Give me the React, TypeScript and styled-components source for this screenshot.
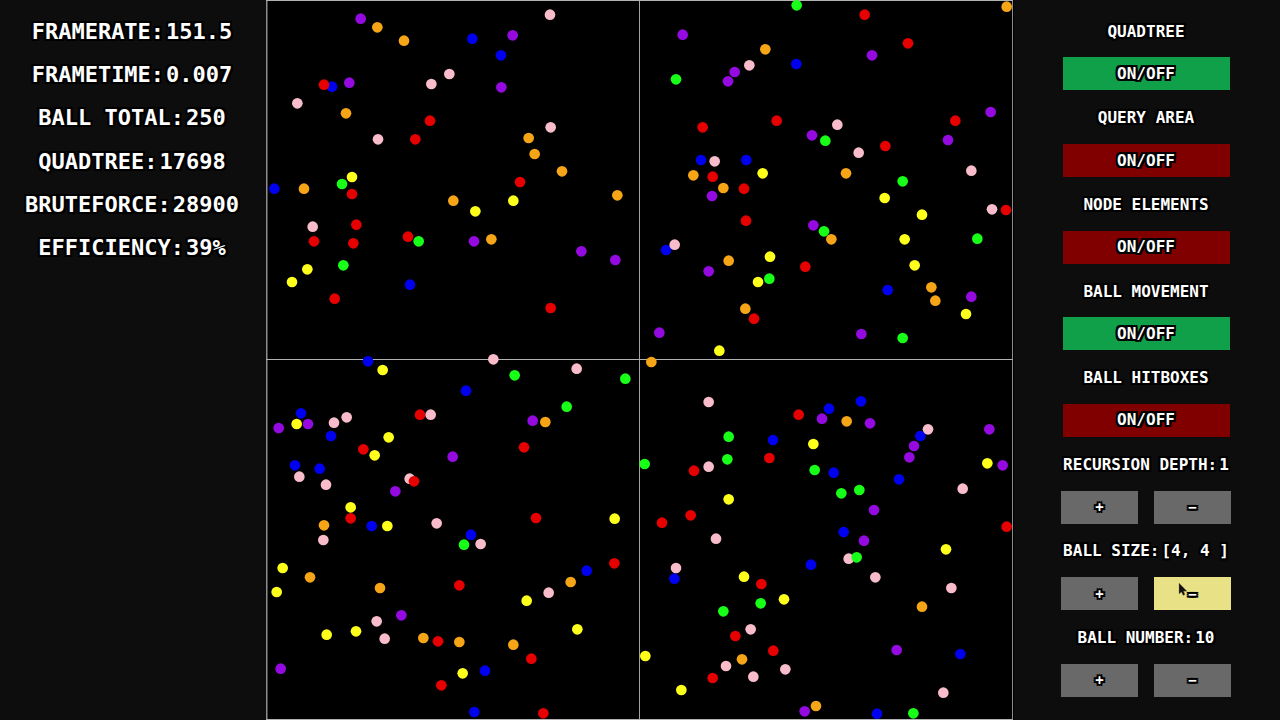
import React, { useId } from "react";
import styled, { createGlobalStyle } from "styled-components";

const GlobalStyle = createGlobalStyle`
  * { box-sizing: border-box; }
  body {
    margin: 0;
    background: #0d0d0d;
    color: #ffffff;
    font-family: "DejaVu Sans Mono", monospace;
    font-weight: 700;
  }
`;

const outline = `
  text-shadow:
    -2px 0 #000, 2px 0 #000, 0 -2px #000, 0 2px #000,
    -1px -1px #000, 1px -1px #000, -1px 1px #000, 1px 1px #000,
    -2px -2px #000, 2px -2px #000, -2px 2px #000, 2px 2px #000;
`;

const Page = styled.div`
  display: grid;
  grid-template-columns: 266fr 748fr 266fr;
  min-height: 100vh;
`;

const StatList = styled.dl`
  margin: 0;
  padding: 10px 2px 17px 0;
  display: grid;
  grid-template-rows: repeat(16, 1fr);
`;

const Stat = styled.div`
  display: flex;
  align-items: center;
  justify-content: center;
  gap: 2px;
  font-size: 22px;
  line-height: 28px;
  white-space: nowrap;
  ${outline}
`;

const StatName = styled.dt`
  margin: 0;
`;

const StatValue = styled.dd`
  margin: 0;
`;

const Field = styled.svg`
  display: block;
  width: 100%;
  height: auto;
  background: #000000;
`;

const Controls = styled.form`
  padding: 9px 2px 18px 0;
  display: grid;
  grid-auto-rows: 1fr;
`;

const Label = styled.div`
  display: flex;
  align-items: center;
  justify-content: center;
  gap: 2px;
  padding-top: 2px;
  font-size: 16px;
  line-height: 24px;
  white-space: nowrap;
  ${outline}
`;

const ControlRow = styled.div`
  display: flex;
  align-items: center;
  justify-content: center;
  gap: 16px;
`;

const Button = styled.button`
  position: relative;
  height: 33px;
  padding: 0;
  border: 0;
  border-radius: 0;
  color: #ffffff;
  font: inherit;
  line-height: 24px;
  ${outline}
`;

const ToggleButton = styled(Button)<{ $on: boolean }>`
  width: 167px;
  font-size: 16px;
  background: ${(p) => (p.$on ? "#10a04a" : "#800000")};
`;

const StepButton = styled(Button)<{ $hover?: boolean }>`
  width: 77px;
  font-size: 14px;
  background: ${(p) => (p.$hover ? "#e9e186" : "#696969")};
`;

const Pointer = styled.svg`
  position: absolute;
  left: 24px;
  top: 5px;
  width: 10px;
  height: 15px;
`;

const stats: [string, string][] = [
  ["FRAMERATE:", "151.5"],
  ["FRAMETIME:", "0.007"],
  ["BALL TOTAL:", "250"],
  ["QUADTREE:", "17698"],
  ["BRUTEFORCE:", "28900"],
  ["EFFICIENCY:", "39%"],
];

const toggles: [string, boolean][] = [
  ["QUADTREE", true],
  ["QUERY AREA", false],
  ["NODE ELEMENTS", false],
  ["BALL MOVEMENT", true],
  ["BALL HITBOXES", false],
];

const steppers: [string, string, boolean][] = [
  ["RECURSION DEPTH:", "1", false],
  ["BALL SIZE:", "[4, 4 ]", true],
  ["BALL NUMBER:", "10", false],
];

const colours = {
  v: "#940ae0",
  o: "#f5a516",
  k: "#f9bccb",
  r: "#e60000",
  b: "#0000f0",
  g: "#18ff18",
  y: "#ffff1c",
};

type Ball = [keyof typeof colours, number, number];

// Field units are thirds of a pixel; each cluster is offset by its origin.
const clusters: { x: number; y: number; balls: Ball[] }[] = [
  {
    x: 0, y: 0,
    balls: [
      ["v", 284, 56], ["o", 334, 82], ["o", 414, 122], ["k", 550, 222], ["k", 496, 252],
      ["b", 198, 260], ["r", 174, 254], ["v", 250, 248], ["k", 94, 310], ["o", 240, 340],
      ["k", 336, 418], ["r", 448, 418], ["r", 492, 362], ["y", 258, 531],
    ],
  },
  {
    x: 552, y: 0,
    balls: [
      ["k", 300, 44], ["b", 67, 116], ["v", 188, 106], ["b", 153, 166], ["v", 154, 262],
      ["k", 302, 382], ["o", 236, 414], ["o", 254, 462], ["o", 336, 514],
    ],
  },
  {
    x: 0, y: 540,
    balls: [
      ["b", 25, 26], ["o", 114, 26], ["g", 228, 12], ["r", 258, 42], ["r", 762, 6],
      ["o", 562, 62], ["y", 628, 94], ["y", 742, 62], ["o", 1054, 46], ["k", 140, 140],
      ["r", 144, 184], ["r", 271, 134], ["r", 262, 190], ["r", 426, 170], ["g", 458, 184],
      ["v", 624, 184], ["o", 676, 178], ["v", 946, 214], ["v", 1048, 240], ["y", 124, 268],
      ["y", 78, 306], ["g", 232, 256], ["b", 432, 314], ["r", 206, 356], ["r", 854, 384],
    ],
  },
  {
    x: 1122, y: 0,
    balls: [
      ["g", 470, 16], ["r", 674, 44], ["o", 1100, 20], ["v", 128, 104], ["r", 804, 130],
      ["o", 376, 148], ["v", 696, 166], ["k", 328, 196], ["b", 469, 192], ["v", 284, 216],
      ["v", 264, 244], ["g", 108, 238], ["v", 1052, 336], ["r", 188, 382], ["r", 410, 362],
      ["k", 592, 374], ["r", 946, 362], ["v", 516, 406], ["g", 556, 422], ["r", 736, 438],
      ["v", 924, 420], ["k", 656, 458], ["b", 183, 480], ["k", 224, 484], ["b", 319, 480],
      ["o", 160, 526], ["r", 218, 530], ["y", 368, 520], ["o", 618, 520], ["k", 994, 512],
    ],
  },
  {
    x: 1122, y: 540,
    balls: [
      ["g", 788, 4], ["o", 250, 24], ["r", 312, 26], ["v", 216, 48], ["y", 734, 54],
      ["y", 846, 104], ["k", 1056, 88], ["r", 1098, 90], ["r", 318, 122], ["v", 520, 136],
      ["g", 552, 154], ["o", 574, 178], ["y", 794, 178], ["g", 1012, 176], ["b", 78, 210],
      ["k", 104, 194], ["y", 390, 230], ["o", 266, 242], ["v", 206, 274], ["r", 496, 260],
      ["y", 824, 256], ["y", 354, 306], ["g", 388, 296], ["b", 743, 330], ["o", 874, 322],
      ["o", 886, 362], ["v", 994, 350], ["o", 316, 386], ["r", 342, 416], ["y", 978, 402],
      ["v", 58, 458], ["v", 664, 462], ["g", 788, 474], ["y", 238, 512],
    ],
  },
  {
    x: 0, y: 1068,
    balls: [
      ["b", 306, 16], ["y", 350, 42], ["k", 682, 10], ["k", 932, 38], ["g", 746, 58],
      ["g", 1078, 68], ["b", 600, 104], ["g", 902, 152], ["b", 105, 172], ["y", 92, 204],
      ["v", 126, 204], ["v", 38, 216], ["k", 204, 200], ["k", 242, 184], ["r", 462, 176],
      ["k", 494, 176], ["v", 800, 194], ["o", 838, 198], ["b", 195, 240], ["y", 368, 244],
      ["r", 292, 280], ["y", 326, 298], ["r", 774, 274], ["v", 560, 302], ["b", 87, 328],
      ["b", 161, 338], ["k", 100, 362], ["k", 180, 386], ["k", 431, 368], ["r", 444, 376],
      ["v", 388, 406], ["y", 254, 454], ["r", 254, 487], ["o", 174, 508], ["b", 317, 510],
      ["y", 364, 510], ["k", 512, 502], ["r", 810, 486], ["y", 1046, 488], ["b", 615, 536],
      ["k", 172, 552],
    ],
  },
  {
    x: 0, y: 1620,
    balls: [
      ["g", 594, 14], ["k", 644, 12], ["y", 50, 84], ["o", 132, 112], ["r", 1045, 70],
      ["b", 962, 92], ["o", 914, 126], ["r", 580, 136], ["o", 342, 144], ["y", 32, 156],
      ["k", 848, 158], ["y", 782, 182], ["v", 406, 226], ["k", 332, 244], ["y", 182, 284],
      ["y", 270, 274], ["k", 356, 296], ["o", 472, 294], ["r", 516, 304], ["o", 580, 306],
      ["o", 742, 314], ["y", 934, 268], ["r", 796, 356], ["v", 44, 386], ["y", 590, 400],
      ["b", 657, 392], ["r", 526, 436], ["b", 625, 516], ["r", 832, 520],
    ],
  },
  {
    x: 1122, y: 1068,
    balls: [
      ["o", 34, 18], ["k", 206, 138], ["b", 663, 136], ["r", 476, 176], ["b", 567, 158],
      ["v", 546, 188], ["o", 620, 196], ["v", 690, 202], ["g", 266, 242], ["b", 399, 252],
      ["y", 520, 264], ["b", 841, 240], ["k", 864, 220], ["v", 822, 270], ["v", 808, 304],
      ["v", 1048, 220], ["g", 14, 324], ["g", 262, 310], ["r", 388, 306], ["r", 162, 344],
      ["k", 206, 332], ["g", 524, 342], ["b", 581, 350], ["y", 1042, 322], ["v", 1088, 328],
      ["b", 777, 370], ["g", 604, 412], ["g", 658, 402], ["k", 968, 398], ["y", 266, 430],
      ["r", 66, 500], ["r", 152, 478], ["v", 702, 462], ["b", 611, 528], ["k", 228, 548],
      ["v", 672, 554], ["r", 1100, 512],
    ],
  },
  {
    x: 1122, y: 1620,
    balls: [
      ["y", 918, 28], ["k", 626, 56], ["g", 650, 52], ["b", 513, 74], ["b", 103, 116],
      ["k", 108, 84], ["y", 312, 110], ["r", 364, 132], ["k", 706, 112], ["k", 934, 144],
      ["y", 432, 178], ["g", 362, 190], ["g", 250, 214], ["o", 846, 200], ["k", 332, 268],
      ["r", 286, 288], ["y", 16, 348], ["r", 400, 332], ["v", 770, 330], ["b", 961, 342],
      ["o", 306, 358], ["k", 258, 378], ["k", 436, 388], ["r", 218, 414], ["k", 340, 410],
      ["y", 124, 450], ["k", 910, 458], ["o", 528, 498], ["v", 494, 514], ["b", 711, 521],
      ["g", 820, 520],
    ],
  },
];

function BallField() {
  return (
    <Field viewBox="0 0 2244 2160" role="img" aria-label="Balls in the quadtree">
      <g fill="none" strokeWidth="3">
        <path d="M1.5 0V2160M2239.5 0V2160" stroke="#8c8c8c" />
        <path d="M4.5 0V2160" stroke="#4a4a4a" />
        <path d="M1120.5 0V2160" stroke="#a2a2a2" />
        <path d="M0 1.5H2241M0 1078.5H2241M0 2158.5H2241" stroke="#b2b2b2" />
      </g>
      {clusters.map((cluster, i) => (
        <g key={i} transform={`translate(${cluster.x} ${cluster.y})`}>
          {cluster.balls.map(([colour, x, y], j) => (
            <circle key={j} cx={x} cy={y} r="16" fill={colours[colour]} />
          ))}
        </g>
      ))}
    </Field>
  );
}

function Toggle({ name, on }: { name: string; on: boolean }) {
  const id = useId();
  return (
    <>
      <Label id={id}>{name}</Label>
      <ControlRow>
        <ToggleButton type="button" $on={on} aria-pressed={on} aria-describedby={id}>
          ON/OFF
        </ToggleButton>
      </ControlRow>
    </>
  );
}

function Stepper({ name, value, hover }: { name: string; value: string; hover: boolean }) {
  const id = useId();
  return (
    <>
      <Label id={id}>
        <span>{name}</span>
        <span>{value}</span>
      </Label>
      <ControlRow role="group" aria-labelledby={id}>
        <StepButton type="button">+</StepButton>
        <StepButton type="button" $hover={hover}>
          −
          {hover && (
            <Pointer viewBox="0 0 10 15" aria-hidden="true">
              <path
                d="M1 1V12L3.4 10L5.2 13.4L7 12.6L5.6 9.2H9Z"
                fill="#111111"
                stroke="#8a8650"
                strokeWidth="0.4"
              />
            </Pointer>
          )}
        </StepButton>
      </ControlRow>
    </>
  );
}

export default function App() {
  return (
    <>
      <GlobalStyle />
      <Page>
        <StatList>
          {stats.map(([name, value]) => (
            <Stat key={name}>
              <StatName>{name}</StatName>
              <StatValue>{value}</StatValue>
            </Stat>
          ))}
        </StatList>
        <BallField />
        <Controls>
          {toggles.map(([name, on]) => (
            <Toggle key={name} name={name} on={on} />
          ))}
          {steppers.map(([name, value, hover]) => (
            <Stepper key={name} name={name} value={value} hover={hover} />
          ))}
        </Controls>
      </Page>
    </>
  );
}
